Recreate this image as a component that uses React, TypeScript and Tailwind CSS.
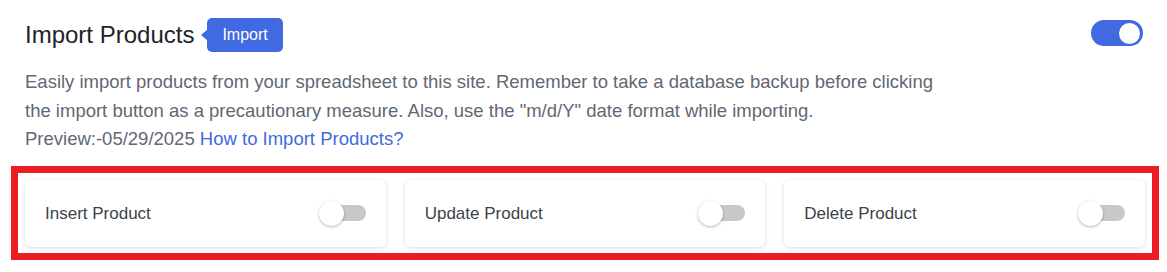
import { useState } from 'react';

const actions = ['Insert Product', 'Update Product', 'Delete Product'];

function Toggle({ on, onChange, big }: { on: boolean; onChange: () => void; big?: boolean }) {
  if (big) {
    return (
      <button
        onClick={onChange}
        className={`relative w-[52px] h-[26px] rounded-full ${on ? 'bg-[#4169e1]' : 'bg-[#c8c8c8]'}`}
      >
        <span
          className={`absolute top-[3px] w-[21px] h-[21px] rounded-full bg-white ${on ? 'left-[28px]' : 'left-[3px]'}`}
        />
      </button>
    );
  }
  return (
    <button onClick={onChange} className="relative w-[47px] h-[25px] flex items-center">
      <span className={`ml-[4px] w-[43px] h-[16px] rounded-full ${on ? 'bg-[#a9bcf2]' : 'bg-[#c8c8c8]'}`} />
      <span
        className={`absolute top-0 w-[25px] h-[25px] rounded-full shadow-[0_1px_3px_rgba(0,0,0,0.3)] ${
          on ? 'left-[22px] bg-[#4169e1]' : 'left-0 bg-white'
        }`}
      />
    </button>
  );
}

export default function App() {
  const [enabled, setEnabled] = useState(true);
  const [flags, setFlags] = useState<Record<string, boolean>>({});

  return (
    <div className="w-[1167px] h-[272px] bg-white font-['Liberation_Sans',Arial,sans-serif]">
      <div className="px-[25px] pt-[18px]">
        {/* Header */}
        <div className="flex items-center justify-between h-[34px]">
          <div className="flex items-center">
            <h1 className="text-[24px] text-[#1d2327] leading-[34px]">Import Products</h1>
            <span className="relative ml-[13px] h-[34px] px-[15px] flex items-center rounded-[5px] bg-[#4169e1] text-white text-[16px]">
              <span className="absolute left-[-6px] top-[11px] w-0 h-0 border-y-[6px] border-y-transparent border-r-[7px] border-r-[#4169e1]" />
              Import
            </span>
          </div>
          <div className="mr-[-1px] mt-[3px]">
            <Toggle big on={enabled} onChange={() => setEnabled(!enabled)} />
          </div>
        </div>

        {/* Description */}
        <p className="mt-[16px] text-[18.5px] leading-[28.5px] text-[#5f6874] max-w-[915px]">
          Easily import products from your spreadsheet to this site. Remember to take a database backup before clicking
          the import button as a precautionary measure. Also, use the "m/d/Y" date format while importing.
          <br />
          Preview:-05/29/2025{' '}
          <a href="#" className="text-[#4169e1]">
            How to Import Products?
          </a>
        </p>
      </div>

      {/* Actions */}
      <div className="mx-[11px] mt-[12px] w-[1148px] border-[7px] border-[#ed1c24] px-[7px] pt-[7px] pb-[6px] grid grid-cols-3 gap-[19px]">
        {actions.map((label) => (
          <div
            key={label}
            className="h-[67px] rounded-[6px] bg-white shadow-[0_1px_4px_rgba(40,60,100,0.18)] flex items-center justify-between pl-[20px] pr-[20px]"
          >
            <span className="text-[17px] text-[#3c434a] pt-[2px]">{label}</span>
            <Toggle
              on={!!flags[label]}
              onChange={() => setFlags({ ...flags, [label]: !flags[label] })}
            />
          </div>
        ))}
      </div>
    </div>
  );
}
